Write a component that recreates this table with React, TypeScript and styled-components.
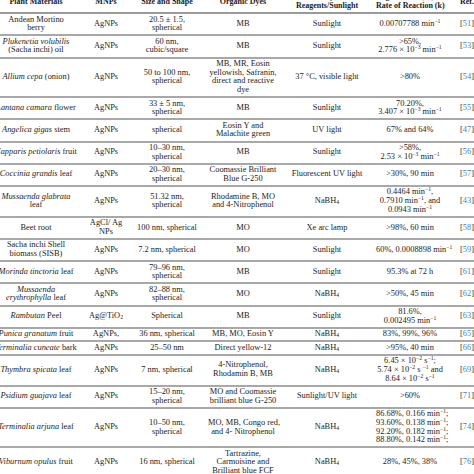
import React from 'react';
import styled, {createGlobalStyle} from 'styled-components';

const Global = createGlobalStyle`
	html, body {
		margin: 0;
		padding: 0;
		background: #fff;
		overflow: hidden;
	}
	body {
		width: 474px;
		height: 474px;
	}
`;

const Page = styled.div`
	width: 474px;
	height: 474px;
	overflow: hidden;
`;

const Table = styled.table`
	border-collapse: collapse;
	table-layout: fixed;
	width: 504px;
	margin: -8px 0 0 -14px;
	font-family: 'Liberation Serif', 'Times New Roman', serif;
	color: #1c1c1c;
`;

const HeadCell = styled.th`
	font-size: 8px;
	font-weight: bold;
	line-height: 8.7px;
	padding: 1.4px 0;
	text-align: center;
	vertical-align: middle;
	white-space: nowrap;
	border-bottom: 2px solid #9a9a9a;
`;

const Cell = styled.td`
	font-size: 8.4px;
	line-height: 8.7px;
	padding: 1.4px 0;
	text-align: center;
	vertical-align: middle;
	white-space: nowrap;
	border-bottom: 2px solid #a8a8a8;
`;

const Sup = styled.sup`
	font-size: 0.68em;
	line-height: 0;
	vertical-align: 0.45em;
`;

const Sub = styled.sub`
	font-size: 0.68em;
	line-height: 0;
	vertical-align: -0.25em;
`;

const RefNum = styled.span`
	color: #3f7fc6;
`;

const widths = [100, 40, 82, 70, 98, 68, 46];

const minus1 = <Sup>−1</Sup>;
const NaBH4 = <>NaBH<Sub>4</Sub></>;

type Row = {
	plant: React.ReactNode;
	mnp: React.ReactNode;
	size: React.ReactNode;
	dyes: React.ReactNode;
	reagent: React.ReactNode;
	rate: React.ReactNode;
	ref: string;
};

const rows: Row[] = [
	{plant: <>Andean Mortino<br />berry</>, mnp: 'AgNPs', size: <>20.5 ± 1.5,<br />spherical</>, dyes: 'MB', reagent: 'Sunlight', rate: <>0.00707788 min{minus1}</>, ref: '51'},
	{plant: <><i>Plukenetia volubilis</i><br />(Sacha inchi) oil</>, mnp: 'AgNPs', size: <>60 nm,<br />cubic/square</>, dyes: 'MB', reagent: 'Sunlight', rate: <>&gt;65%,<br />2.776 × 10<Sup>−3</Sup> min{minus1}</>, ref: '53'},
	{plant: <><i>Allium cepa</i> (onion)</>, mnp: 'AgNPs', size: <>50 to 100 nm,<br />spherical</>, dyes: <>MB, MR, Eosin<br />yellowish, Safranin,<br />direct and reactive<br />dye</>, reagent: '37 °C, visible light', rate: '>80%', ref: '54'},
	{plant: <><i>Lantana camara</i> flower</>, mnp: 'AgNPs', size: <>33 ± 5 nm,<br />spherical</>, dyes: 'MB', reagent: 'Sunlight', rate: <>70.20%,<br />3.407 × 10<Sup>−3</Sup> min{minus1}</>, ref: '55'},
	{plant: <><i>Angelica gigas</i> stem</>, mnp: 'AgNPs', size: 'spherical', dyes: <>Eosin Y and<br />Malachite green</>, reagent: 'UV light', rate: '67% and 64%', ref: '47'},
	{plant: <><i>Capparis petiolaris</i> fruit</>, mnp: 'AgNPs', size: <>10–30 nm,<br />spherical</>, dyes: 'MB', reagent: 'Sunlight', rate: <>&gt;58%,<br />2.53 × 10<Sup>−3</Sup> min{minus1}</>, ref: '56'},
	{plant: <><i>Coccinia grandis</i> leaf</>, mnp: 'AgNPs', size: <>20–30 nm,<br />spherical</>, dyes: <>Coomassie Brilliant<br />Blue G-250</>, reagent: 'Fluorescent UV light', rate: '>30%, 90 min', ref: '57'},
	{plant: <><i>Mussaenda glabrata</i><br />leaf</>, mnp: 'AgNPs', size: <>51.32 nm,<br />spherical</>, dyes: <>Rhodamine B, MO<br />and 4-Nitrophenol</>, reagent: NaBH4, rate: <>0.4464 min{minus1},<br />0.7910 min{minus1}, and<br />0.0943 min{minus1}</>, ref: '43'},
	{plant: 'Beet root', mnp: <>AgCl/ Ag<br />NPs</>, size: '100 nm, spherical', dyes: 'MO', reagent: 'Xe arc lamp', rate: '>98%, 60 min', ref: '58'},
	{plant: <>Sacha inchi Shell<br />biomass (SISB)</>, mnp: 'AgNPs', size: '7.2 nm, spherical', dyes: 'MO', reagent: 'Sunlight', rate: <>60%, 0.0008898 min{minus1}</>, ref: '59'},
	{plant: <><i>Morinda tinctoria</i> leaf</>, mnp: 'AgNPs', size: <>79–96 nm,<br />spherical</>, dyes: 'MB', reagent: 'Sunlight', rate: '95.3% at 72 h', ref: '61'},
	{plant: <><i>Mussaenda</i><br /><i>erythrophylla</i> leaf</>, mnp: 'AgNPs', size: <>82–88 nm,<br />spherical</>, dyes: 'MO', reagent: NaBH4, rate: '>50%, 45 min', ref: '62'},
	{plant: <><i>Rambutan</i> Peel</>, mnp: <>Ag@TiO<Sub>2</Sub></>, size: 'Spherical', dyes: 'MB', reagent: 'Sunlight', rate: <>81.6%,<br />0.002495 min{minus1}</>, ref: '63'},
	{plant: <><i>Punica granatum</i> fruit</>, mnp: 'AgNPs,', size: '36 nm, spherical', dyes: 'MB, MO, Eosin Y', reagent: NaBH4, rate: '83%, 99%, 96%', ref: '65'},
	{plant: <><i>Terminalia cuneate</i> bark</>, mnp: 'AgNPs', size: '25–50 nm', dyes: 'Direct yellow-12', reagent: NaBH4, rate: '>95%, 40 min', ref: '66'},
	{plant: <><i>Thymbra spicata</i> leaf</>, mnp: 'AgNPs', size: '7 nm, spherical', dyes: <>4-Nitrophenol,<br />Rhodamin B, MB</>, reagent: NaBH4, rate: <>6.45 × 10<Sup>−2</Sup> s<Sup>−1</Sup>;<br />5.74 × 10<Sup>−2</Sup> s <Sup>−1</Sup> and<br />8.64 × 10<Sup>−2</Sup> s<Sup>−1</Sup></>, ref: '69'},
	{plant: <><i>Psidium guajava</i> leaf</>, mnp: 'AgNPs', size: <>15–20 nm,<br />spherical</>, dyes: <>MO and Coomassie<br />brilliant blue G-250</>, reagent: 'Sunlight/UV light', rate: '>60%', ref: '71'},
	{plant: <><i>Terminalia arjuna</i> leaf</>, mnp: 'AgNPs', size: <>10–50 nm,<br />spherical</>, dyes: <>MO, MB, Congo red,<br />and 4- Nitrophenol</>, reagent: NaBH4, rate: <>86.68%, 0.166 min{minus1};<br />93.60%, 0.138 min{minus1};<br />92.20%, 0.182 min{minus1};<br />88.80%, 0.142 min{minus1};</>, ref: '74'},
	{plant: <><i>Viburnum opulus</i> fruit</>, mnp: 'AgNPs', size: '16 nm, spherical', dyes: <>Tartrazine,<br />Carmoisine and<br />Brilliant blue FCF</>, reagent: NaBH4, rate: '28%, 45%, 38%', ref: '76'},
];

export default function App() {
	return (
		<Page>
			<Global />
			<Table>
				<colgroup>
					{widths.map((w, i) => <col key={i} style={{width: w}} />)}
				</colgroup>
				<thead>
					<tr>
						<HeadCell>Plant Materials</HeadCell>
						<HeadCell>MNPs</HeadCell>
						<HeadCell>Size and Shape</HeadCell>
						<HeadCell>Organic Dyes</HeadCell>
						<HeadCell>Catalyst/<br />Reagents/Sunlight</HeadCell>
						<HeadCell>Degradation (%) or<br />Rate of Reaction (k)</HeadCell>
						<HeadCell>Ref.</HeadCell>
					</tr>
				</thead>
				<tbody>
					{rows.map((r) => (
						<tr key={r.ref}>
							<Cell>{r.plant}</Cell>
							<Cell>{r.mnp}</Cell>
							<Cell>{r.size}</Cell>
							<Cell>{r.dyes}</Cell>
							<Cell>{r.reagent}</Cell>
							<Cell>{r.rate}</Cell>
							<Cell>[<RefNum>{r.ref}</RefNum>]</Cell>
						</tr>
					))}
				</tbody>
			</Table>
		</Page>
	);
}
